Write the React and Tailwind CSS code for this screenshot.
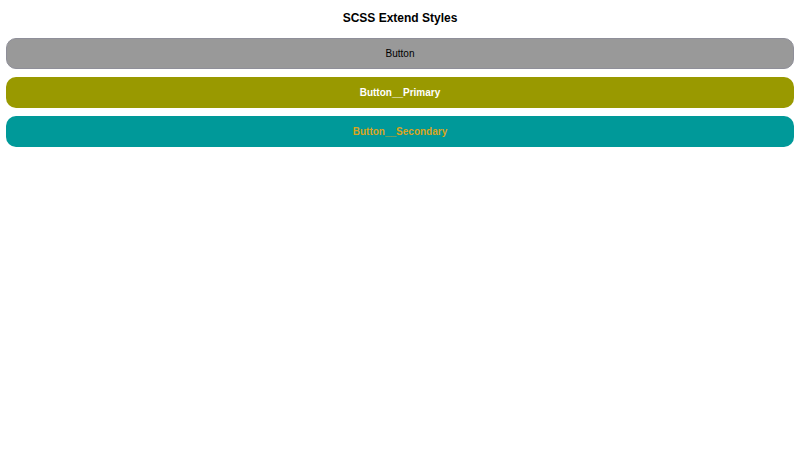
export default function App() {
  return (
    <div className="min-h-screen bg-white px-[6px] pt-[10px]" style={{ fontFamily: '"Liberation Sans", Arial, sans-serif' }}>
      <h1 className="text-center text-[12px] font-bold text-black leading-[16px] mb-[12px]">
        SCSS Extend Styles
      </h1>
      <div className="flex flex-col gap-[8px]">
        <button className="h-[31px] w-full rounded-[10px] border border-[#8f8f99] bg-[#999999] text-[10px] text-black">
          Button
        </button>
        <button className="h-[31px] w-full rounded-[10px] bg-[#999900] text-[10px] font-bold text-white">
          Button__Primary
        </button>
        <button className="h-[31px] w-full rounded-[10px] bg-[#009999] text-[10px] font-bold text-[#daa520]">
          Button__Secondary
        </button>
      </div>
    </div>
  )
}
